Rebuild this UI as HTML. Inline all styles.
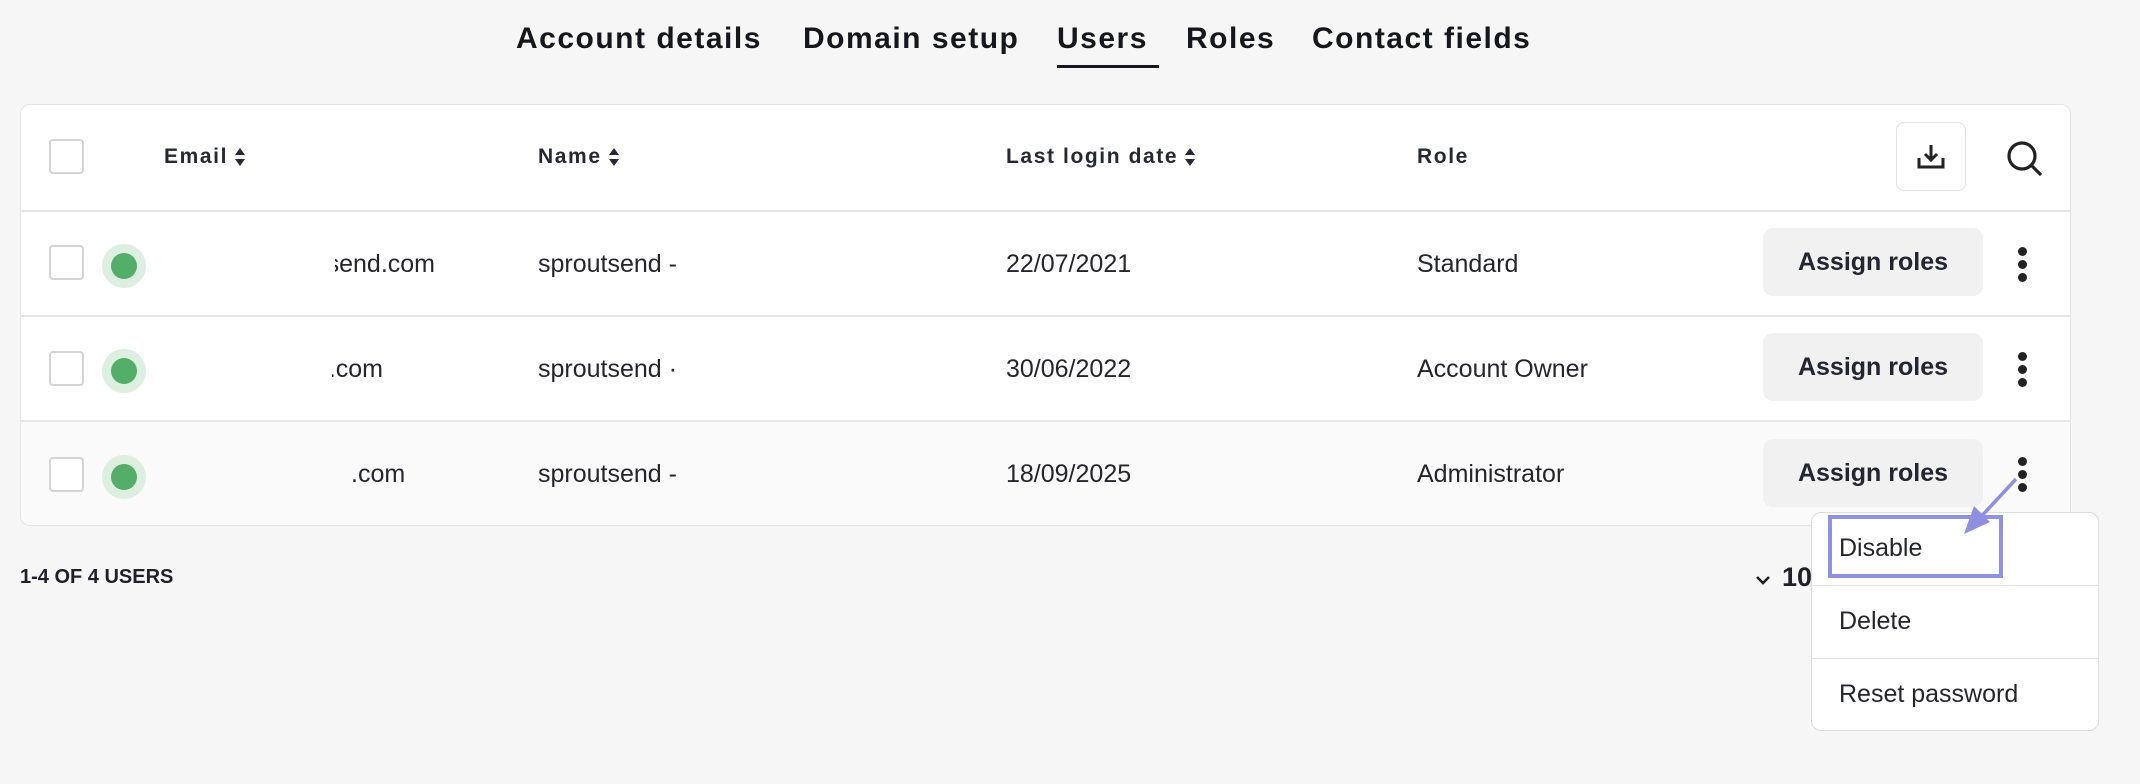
<!DOCTYPE html>
<html><head><meta charset="utf-8"><style>
*{margin:0;padding:0;box-sizing:border-box}
body{width:2140px;height:784px;background:#f6f6f6;font-family:"Liberation Sans",sans-serif;color:#1f2029;position:relative;overflow:hidden}
.a{position:absolute;white-space:nowrap}
.tab{top:22px;font-size:30px;font-weight:bold;letter-spacing:1.5px;color:#16171c}
.card{left:20px;top:104px;width:2051px;height:422px;background:#fff;border:1px solid #e4e4e4;border-radius:10px;overflow:hidden}
.line{position:absolute;left:0;right:0;height:2px;background:#e6e6e6}
.cb{position:absolute;left:28px;width:35px;height:35px;border:2px solid #d4d4d4;border-radius:4px;background:#fff}
.hd{font-size:21px;font-weight:bold;letter-spacing:1.6px;color:#262834}
.td{font-size:25px;color:#25262c}
.btn{position:absolute;left:1742px;width:220px;height:68px;background:#f1f1f1;border-radius:10px;font-size:25px;font-weight:bold;text-align:center;line-height:68px;color:#232530}
.dot{position:absolute;left:81px;width:44px;height:44px;border-radius:50%;background:#dcefe0}
.dot::after{content:"";position:absolute;left:9px;top:9px;width:26px;height:26px;border-radius:50%;background:#54ad68}
.keb{position:absolute;left:1997px;width:10px}
.keb i{display:block;width:9px;height:9px;border-radius:50%;background:#222;margin-bottom:4px}
.sort{display:inline-block;vertical-align:middle;margin-left:6px}
.clip{overflow:hidden;text-align:right;direction:rtl}
</style></head><body>
<div class="a tab" style="left:516px">Account details</div>
<div class="a tab" style="left:803px">Domain setup</div>
<div class="a tab" style="left:1057px">Users</div>
<div class="a" style="left:1057px;top:65px;width:102px;height:3px;background:#16171c"></div>
<div class="a tab" style="left:1186px">Roles</div>
<div class="a tab" style="left:1312px">Contact fields</div>

<div class="a card">
  <div class="line" style="top:105px"></div>
  <div class="line" style="top:210px"></div>
  <div class="line" style="top:315px"></div>
  <div style="position:absolute;left:0;right:0;top:317px;bottom:0;background:#fafafa"></div>
  <div class="cb" style="top:34px"></div>
  <div class="a hd" style="left:143px;top:40px">Email<svg class="sort" width="12" height="20" viewBox="0 0 12 20"><path d="M6 1L11 8H1Z M6 19L11 12H1Z" fill="#262834"/></svg></div>
  <div class="a hd" style="left:517px;top:40px">Name<svg class="sort" width="12" height="20" viewBox="0 0 12 20"><path d="M6 1L11 8H1Z M6 19L11 12H1Z" fill="#262834"/></svg></div>
  <div class="a hd" style="left:985px;top:40px">Last login date<svg class="sort" width="12" height="20" viewBox="0 0 12 20"><path d="M6 1L11 8H1Z M6 19L11 12H1Z" fill="#262834"/></svg></div>
  <div class="a hd" style="left:1396px;top:40px">Role</div>
  <div style="position:absolute;left:1875px;top:17px;width:70px;height:69px;border:1px solid #e2e2e2;border-radius:8px"></div>
  <svg class="a" style="left:1895px;top:38px" width="30" height="28" viewBox="0 0 30 28" fill="none" stroke="#222" stroke-width="3"><path d="M15 2V17M9 11l6 6 6-6M3 15v9h24v-9"/></svg>
  <svg class="a" style="left:1984px;top:34px" width="40" height="40" viewBox="0 0 40 40" fill="none" stroke="#222" stroke-width="3.2"><circle cx="17" cy="17" r="13"/><path d="M26.5 26.5L36 36"/></svg>

  <div class="cb" style="top:140px"></div><div class="dot" style="top:139px"></div>
  <div class="a td clip" style="left:314px;top:145px;width:100px">sproutsend.com</div>
  <div class="a td" style="left:517px;top:145px">sproutsend -</div>
  <div class="a td" style="left:985px;top:145px">22/07/2021</div>
  <div class="a td" style="left:1396px;top:145px">Standard</div>
  <div class="btn" style="top:123px">Assign roles</div>
  <div class="keb" style="top:142px"><i></i><i></i><i></i></div>

  <div class="cb" style="top:246px"></div><div class="dot" style="top:244px"></div>
  <div class="a td clip" style="left:311px;top:250px;width:51px">x.com</div>
  <div class="a td" style="left:517px;top:250px">sproutsend ·</div>
  <div class="a td" style="left:985px;top:250px">30/06/2022</div>
  <div class="a td" style="left:1396px;top:250px">Account Owner</div>
  <div class="btn" style="top:228px">Assign roles</div>
  <div class="keb" style="top:247px"><i></i><i></i><i></i></div>

  <div class="cb" style="top:352px"></div><div class="dot" style="top:350px"></div>
  <div class="a td" style="left:330px;top:355px">.com</div>
  <div class="a td" style="left:517px;top:355px">sproutsend -</div>
  <div class="a td" style="left:985px;top:355px">18/09/2025</div>
  <div class="a td" style="left:1396px;top:355px">Administrator</div>
  <div class="btn" style="top:334px">Assign roles</div>
  <div class="keb" style="top:352px"><i></i><i></i><i></i></div>
</div>

<div class="a" style="left:20px;top:566px;font-size:20px;font-weight:bold;color:#1f2029">1-4 OF 4 USERS</div>
<svg class="a" style="left:1755px;top:574px" width="16" height="12" viewBox="0 0 16 12" fill="none" stroke="#222" stroke-width="2.6"><path d="M2 3l6 6 6-6"/></svg>
<div class="a" style="left:1782px;top:562px;font-size:27px;font-weight:bold;color:#1f2029">10</div>

<div class="a" style="left:1811px;top:512px;width:288px;height:219px;background:#fff;border:1px solid #dcdcdc;border-radius:10px">
  <div class="line" style="top:72px;background:#e4e4e4;height:1px"></div>
  <div class="line" style="top:145px;background:#e4e4e4;height:1px"></div>
  <div class="a td" style="left:27px;top:21px">Disable</div>
  <div class="a td" style="left:27px;top:94px">Delete</div>
  <div class="a td" style="left:27px;top:167px">Reset password</div>
</div>
<div class="a" style="left:1828px;top:515px;width:175px;height:63px;border:4px solid #9090e2"></div>
<svg class="a" style="left:1960px;top:476px" width="60" height="70" viewBox="0 0 60 70"><path d="M56 3L18 44" stroke="#8f8fe0" stroke-width="3.5"/><path d="M4 58L14 30L30 46Z" fill="#8f8fe0"/></svg>
</body></html>
